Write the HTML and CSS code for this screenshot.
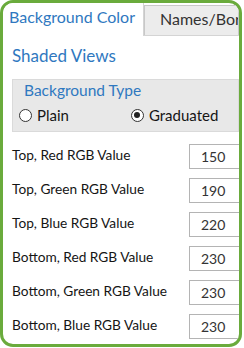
FILE: index.html
```html
<!DOCTYPE html>
<html lang="en">
<head>
  <meta charset="UTF-8" />
  <title>Background Color</title>
  <link rel="stylesheet" href="styles.css">
</head>
<body>
  <div class="frame">
    <div class="tabs">
      <div class="tab active">Background Color</div>
      <div class="tab">Names/Borders</div>
    </div>

    <div class="panel">
      <h2 class="section-title">Shaded Views</h2>

      <div class="group">
        <div class="group-title">Background Type</div>
        <div class="radio-row">
          <label class="radio"><span class="dot"></span>Plain</label>
          <label class="radio checked"><span class="dot"></span>Graduated</label>
        </div>
      </div>

      <div class="field">
        <span class="field-label">Top, Red RGB Value</span>
        <span class="field-box">150</span>
      </div>
      <div class="field">
        <span class="field-label">Top, Green RGB Value</span>
        <span class="field-box">190</span>
      </div>
      <div class="field">
        <span class="field-label">Top, Blue RGB Value</span>
        <span class="field-box">220</span>
      </div>
      <div class="field">
        <span class="field-label">Bottom, Red RGB Value</span>
        <span class="field-box">230</span>
      </div>
      <div class="field">
        <span class="field-label">Bottom, Green RGB Value</span>
        <span class="field-box">230</span>
      </div>
      <div class="field">
        <span class="field-label">Bottom, Blue RGB Value</span>
        <span class="field-box">230</span>
      </div>
    </div>
  </div>
</body>
</html>
```

FILE: styles.css
```css
* {
  margin: 0;
  padding: 0;
  box-sizing: border-box;
}

body {
  font-family: Lato, 'Open Sans', sans-serif;
  background: white;
  color: #151515;
  font-size: 13.7px;
}

.frame {
  width: 242px;
  height: 347px;
  border: 3px solid #6aab3c;
  border-radius: 13px;
  overflow: hidden;
  background: white;
}

.tabs {
  display: flex;
  align-items: flex-end;
  height: 33px;
  border-bottom: 1px solid #d4d4d4;
}

.tab {
  height: 30px;
  padding: 3px 0 0 15px;
  background: #ececec;
  border: 1px solid #c8c8c8;
  border-bottom: none;
  color: #333;
  font-size: 16px;
  white-space: nowrap;
  overflow: hidden;
  flex: 1;
}

.tab.active {
  flex: 0 0 141px;
  height: 34px;
  margin-bottom: -1px;
  padding: 4px 0 0 6px;
  background: white;
  border-color: #d4d4d4;
  border-left: none;
  color: #2f78c0;
}

.panel {
  padding: 9px 0 0 9px;
}

.section-title {
  font-size: 17px;
  font-weight: 400;
  color: #2f78c0;
  height: 34px;
}

.group {
  background: #e8e8e8;
  border: 1px solid #dadada;
  height: 53px;
  padding: 1px 0 0 11px;
  margin-bottom: 7px;
}

.group-title {
  color: #2f78c0;
  font-size: 15.5px;
  height: 25px;
}

.radio-row {
  display: flex;
  margin-left: -5px;
  font-size: 15px;
}

.radio {
  display: flex;
  align-items: center;
  gap: 5px;
  color: #151515;
}

.radio + .radio {
  margin-left: 62px;
}

.dot {
  width: 13px;
  height: 13px;
  border: 1.5px solid #333;
  border-radius: 50%;
  background: white;
  display: flex;
  align-items: center;
  justify-content: center;
}

.radio.checked .dot::after {
  content: '';
  width: 6px;
  height: 6px;
  border-radius: 50%;
  background: #222;
}

.field {
  display: flex;
  align-items: center;
  justify-content: space-between;
  height: 34px;
}

.field-label {
  padding-bottom: 3px;
}

.field-box {
  width: 50px;
  height: 25px;
  border: 1px solid #b4b4b4;
  border-right: none;
  padding: 3px 0 0 11px;
  color: #333;
  font-size: 14px;
}
```
